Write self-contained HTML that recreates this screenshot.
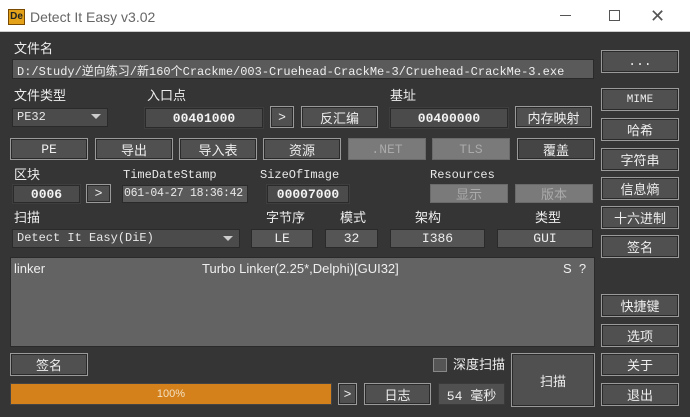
<!DOCTYPE html><html><head><meta charset="utf-8"><style>
*{box-sizing:border-box;margin:0;padding:0}
body{width:690px;height:417px;background:#353535;position:relative;overflow:hidden;font-family:"Liberation Mono","Noto Sans CJK SC",monospace;font-size:12px;color:#e8e8e8}
.a{position:absolute;white-space:nowrap}
.t{position:absolute;white-space:nowrap;font-family:"Liberation Sans","Noto Sans CJK SC",sans-serif;font-size:13px;color:#eee;line-height:14px}
.b{position:absolute;white-space:nowrap;background:#505050;border:1px solid #9a9a9a;box-shadow:inset 0 0 0 1px #2a2a2a;color:#eee;display:flex;align-items:center;justify-content:center;font-family:"Liberation Mono","Noto Sans CJK SC",monospace;font-size:13px}
.d{background:#7a7a7a;color:#aaa;border-color:#6a6a6a;box-shadow:none}
.f{position:absolute;background:#4b4b4b;border:1px solid #2a2a2a;outline:1px solid #3e3e3e;color:#f2f2f2;display:flex;align-items:center;justify-content:center;font-weight:bold;font-size:13px}
</style></head><body>
<div class="a" style="left:0;top:0;width:690px;height:32px;background:#fff;border-bottom:1px solid #ccc"></div>
<div class="a" style="left:8px;top:9px;width:17px;height:16px;background:#e3a21a;border:1px solid #7a4a00;font:bold 10px 'Liberation Sans';color:#222;line-height:14px;text-align:center">De</div>
<div class="a" style="left:30px;top:9px;font:14px 'Liberation Sans',sans-serif;color:#666">Detect It Easy v3.02</div>
<div class="a" style="left:560px;top:15px;width:11px;height:1px;background:#555"></div>
<div class="a" style="left:609px;top:10px;width:11px;height:11px;border:1px solid #555"></div>
<div class="a" style="left:650px;top:6px;font:18px 'Liberation Sans';color:#555">✕</div>

<div class="t" style="left:14px;top:42px">文件名</div>
<div class="a" style="left:12px;top:59px;width:582px;height:20px;background:#5a5a5a;border:1px solid #2a2a2a;padding:2px 4px;font-size:12px;color:#eee">D:/Study/逆向练习/新160个Crackme/003-Cruehead-CrackMe-3/Cruehead-CrackMe-3.exe</div>
<div class="b" style="left:601px;top:50px;width:78px;height:23px">...</div>

<div class="t" style="left:14px;top:89px">文件类型</div>
<div class="a" style="left:12px;top:108px;width:96px;height:19px;background:#4b4b4b;border:1px solid #2a2a2a;padding:1px 4px">PE32</div>
<div class="a" style="left:91px;top:114px;width:0;height:0;border:5px solid transparent;border-top:5px solid #ccc"></div>
<div class="t" style="left:147px;top:89px">入口点</div>
<div class="f" style="left:145px;top:108px;width:118px;height:20px">00401000</div>
<div class="b" style="left:270px;top:106px;width:24px;height:22px">&gt;</div>
<div class="b" style="left:301px;top:106px;width:77px;height:22px">反汇编</div>
<div class="t" style="left:390px;top:89px">基址</div>
<div class="f" style="left:390px;top:108px;width:118px;height:20px">00400000</div>
<div class="b" style="left:515px;top:106px;width:77px;height:22px">内存映射</div>
<div class="b" style="left:601px;top:88px;width:78px;height:23px;font-size:11px">MIME</div>
<div class="b" style="left:601px;top:118px;width:78px;height:23px">哈希</div>
<div class="b" style="left:601px;top:148px;width:78px;height:23px">字符串</div>
<div class="b" style="left:601px;top:177px;width:78px;height:23px">信息熵</div>
<div class="b" style="left:601px;top:206px;width:78px;height:23px">十六进制</div>
<div class="b" style="left:601px;top:235px;width:78px;height:23px">签名</div>

<div class="b" style="left:10px;top:138px;width:78px;height:22px">PE</div>
<div class="b" style="left:95px;top:138px;width:78px;height:22px">导出</div>
<div class="b" style="left:179px;top:138px;width:78px;height:22px">导入表</div>
<div class="b" style="left:263px;top:138px;width:78px;height:22px">资源</div>
<div class="b d" style="left:348px;top:138px;width:78px;height:22px">.NET</div>
<div class="b d" style="left:432px;top:138px;width:78px;height:22px">TLS</div>
<div class="b" style="left:517px;top:138px;width:78px;height:22px;background:#454545">覆盖</div>

<div class="t" style="left:14px;top:168px">区块</div>
<div class="f" style="left:13px;top:185px;width:67px;height:18px">0006</div>
<div class="b" style="left:86px;top:184px;width:25px;height:19px">&gt;</div>
<div class="a" style="left:123px;top:168px;font-size:12px">TimeDateStamp</div>
<div class="a" style="left:122px;top:185px;width:126px;height:18px;background:#5a5a5a;border:1px solid #2a2a2a;padding:1px 1px;font-size:11.5px;letter-spacing:-0.3px;overflow:hidden">061-04-27 18:36:42</div>
<div class="a" style="left:260px;top:168px;font-size:12px">SizeOfImage</div>
<div class="f" style="left:267px;top:185px;width:82px;height:18px">00007000</div>
<div class="a" style="left:430px;top:168px;font-size:12px">Resources</div>
<div class="b d" style="left:430px;top:184px;width:78px;height:19px">显示</div>
<div class="b d" style="left:515px;top:184px;width:78px;height:19px">版本</div>

<div class="t" style="left:14px;top:211px">扫描</div>
<div class="a" style="left:12px;top:229px;width:228px;height:19px;background:#4b4b4b;border:1px solid #2a2a2a;padding:1px 4px">Detect It Easy(DiE)</div>
<div class="a" style="left:223px;top:236px;width:0;height:0;border:5px solid transparent;border-top:5px solid #ccc"></div>
<div class="t" style="left:266px;top:211px">字节序</div>
<div class="b" style="left:251px;top:229px;width:62px;height:19px;border-color:#2a2a2a;box-shadow:none;background:#555">LE</div>
<div class="t" style="left:340px;top:211px">模式</div>
<div class="b" style="left:325px;top:229px;width:53px;height:19px;border-color:#2a2a2a;box-shadow:none;background:#555">32</div>
<div class="t" style="left:415px;top:211px">架构</div>
<div class="b" style="left:390px;top:229px;width:95px;height:19px;border-color:#2a2a2a;box-shadow:none;background:#555">I386</div>
<div class="t" style="left:535px;top:211px">类型</div>
<div class="b" style="left:497px;top:229px;width:96px;height:19px;border-color:#2a2a2a;box-shadow:none;background:#555">GUI</div>

<div class="a" style="left:10px;top:257px;width:585px;height:90px;background:#636363;border:1px solid #2a2a2a"></div>
<div class="t" style="left:14px;top:262px">linker</div>
<div class="t" style="left:202px;top:262px">Turbo Linker(2.25*,Delphi)[GUI32]</div>
<div class="t" style="left:563px;top:262px">S&nbsp;&nbsp;?</div>

<div class="b" style="left:601px;top:294px;width:78px;height:23px">快捷键</div>
<div class="b" style="left:601px;top:324px;width:78px;height:23px">选项</div>
<div class="b" style="left:601px;top:353px;width:78px;height:23px">关于</div>
<div class="b" style="left:601px;top:383px;width:78px;height:23px">退出</div>

<div class="b" style="left:10px;top:353px;width:78px;height:23px">签名</div>
<div class="a" style="left:433px;top:358px;width:14px;height:14px;background:#555;border:1px solid #888"></div>
<div class="t" style="left:453px;top:358px">深度扫描</div>
<div class="b" style="left:511px;top:353px;width:84px;height:54px">扫描</div>
<div class="a" style="left:10px;top:383px;width:322px;height:22px;background:#d4811c;border:1px solid #444;color:#f4e0c0;text-align:center;font:11px 'Liberation Sans';line-height:20px">100%</div>
<div class="b" style="left:338px;top:383px;width:19px;height:22px">&gt;</div>
<div class="b" style="left:364px;top:383px;width:67px;height:22px">日志</div>
<div class="b" style="left:438px;top:383px;width:67px;height:22px;border-color:#3a3a3a;box-shadow:none">54 毫秒</div>
</body></html>
